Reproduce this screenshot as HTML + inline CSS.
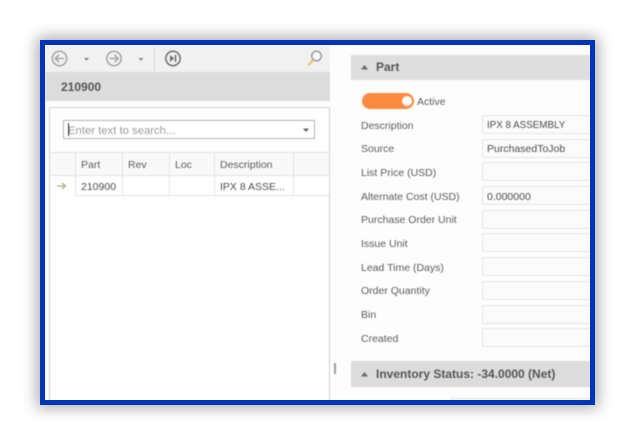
<!DOCTYPE html>
<html>
<head>
<meta charset="utf-8">
<style>
html,body{margin:0;padding:0;background:#fff;}
body{width:635px;height:445px;overflow:hidden;position:relative;font-family:"Liberation Sans",sans-serif;}
#frame{position:absolute;left:40px;top:40px;width:545px;height:355px;border:5px solid #0334b8;box-shadow:0 0 14px 3px rgba(0,0,0,.33);background:#fdfdfd;overflow:hidden;}
#wrap{position:absolute;left:-45px;top:-45px;width:635px;height:445px;filter:blur(.45px);}
.a{position:absolute;box-sizing:border-box;}
.t{position:absolute;font-size:10.5px;line-height:14px;color:#5c5c5c;white-space:nowrap;}
.b{font-weight:bold;font-size:12px;color:#555;font-family:"Liberation Sans",sans-serif;}
.f{position:absolute;left:482px;width:120px;height:19px;box-sizing:border-box;border:1px solid #e6e6e6;background:#fbfbfb;border-radius:1px;}
.v{position:absolute;left:487px;font-size:10.5px;line-height:14px;color:#4c4c4c;white-space:nowrap;}
.l{left:361px;}
.d{position:absolute;background:#e4e4e4;width:1px;top:152px;height:43px;}
</style>
</head>
<body>
<div id="frame">
<div id="wrap">
  <div class="a" style="left:45px;top:45px;width:285px;height:27px;background:#f1f1f1;"></div>
  <div class="a" style="left:45px;top:72px;width:285px;height:29px;background:#dcdcdc;"></div>
  <div class="a" style="left:154px;top:47px;width:1px;height:24px;background:#dadada;"></div>
  <svg class="a" style="left:45px;top:45px;" width="285" height="27" viewBox="0 0 285 27" fill="none">
    <circle cx="14.5" cy="13.5" r="7.2" stroke="#a0a0a0" stroke-width="1.4"/>
    <path d="M19 13.5H10.5M14 9.8L10.3 13.5L14 17.2" stroke="#a8a8a8" stroke-width="1.6"/>
    <path d="M39 13h5l-2.500 2.800z" fill="#808080"/>
    <circle cx="69" cy="13.500" r="7.200" stroke="#a0a0a0" stroke-width="1.4"/>
    <path d="M64.500 13.500H73M69.500 9.800L73.200 13.500L69.500 17.200" stroke="#a8a8a8" stroke-width="1.600"/>
    <path d="M93.500 13h5l-2.500 2.800z" fill="#808080"/>
    <circle cx="128" cy="13.500" r="7.200" stroke="#6e6e6e" stroke-width="1.500"/>
    <path d="M125 10v7l4-3.500z" fill="#6a6a6a"/>
    <path d="M130.500 10v7" stroke="#6a6a6a" stroke-width="1.500"/>
    <circle cx="271.500" cy="11" r="4.800" stroke="#9a9a9a" stroke-width="1.500" fill="#fbfbfb"/>
    <path d="M268 15L263 20.500" stroke="#e8c27c" stroke-width="2.200"/>
  </svg>
  <div class="t b" style="left:61px;top:80px;">210900</div>

  <div class="a" style="left:49px;top:107px;width:281px;height:300px;border:1px solid #d2d2d2;background:#fefefe;"></div>
  <div class="a" style="left:63px;top:120px;width:252px;height:19px;border:1px solid #b4b4b4;background:#fff;"></div>
  <div class="a" style="left:68px;top:123px;width:1px;height:13px;background:#333;"></div>
  <div class="t" style="left:68px;top:124px;color:#9a9a9a;font-size:11.3px;">Enter text to search...</div>
  <svg class="a" style="left:302px;top:127px;" width="8" height="6"><path d="M1 1.500h6L4 5z" fill="#666"/></svg>

  <div class="a" style="left:50px;top:152px;width:279px;height:24px;background:#f9f9f9;border-top:1px solid #e2e2e2;border-bottom:1px solid #e2e2e2;"></div>
  <div class="a" style="left:75px;top:176px;width:254px;height:20px;border-bottom:1px solid #e2e2e2;background:#fff;"></div>
  <div class="d" style="left:75px;"></div>
  <div class="d" style="left:122px;"></div>
  <div class="d" style="left:169px;"></div>
  <div class="d" style="left:214px;"></div>
  <div class="d" style="left:293px;"></div>
  <div class="t" style="left:81px;top:158px;">Part</div>
  <div class="t" style="left:128px;top:158px;">Rev</div>
  <div class="t" style="left:175px;top:158px;">Loc</div>
  <div class="t" style="left:220px;top:158px;">Description</div>
  <div class="t" style="left:81px;top:180px;color:#4c4c4c;">210900</div>
  <div class="t" style="left:220px;top:180px;color:#4c4c4c;">IPX 8 ASSE...</div>
  <svg class="a" style="left:56px;top:181px;" width="12" height="10" fill="none"><path d="M1 5h8.500M6 2l3.500 3L6 8" stroke="#a8b47c" stroke-width="1.200"/></svg>

  <div class="a" style="left:334px;top:363px;width:2px;height:11px;background:#9c9c9c;"></div>

  <div class="a" style="left:351px;top:55px;width:240px;height:25px;background:#dedede;"></div>
  <svg class="a" style="left:360px;top:63px;" width="9" height="8"><path d="M1 6.500h7L4.500 2z" fill="#6a6a6a"/></svg>
  <div class="t b" style="left:376px;top:60px;">Part</div>

  <div class="a" style="left:362px;top:93px;width:52px;height:16px;border-radius:8px;background:#fa8a3f;"></div>
  <div class="a" style="left:402px;top:96px;width:10px;height:10px;border-radius:50%;background:#fff;"></div>
  <div class="t" style="left:417px;top:95px;">Active</div>

  <div class="t l" style="top:119px;">Description</div>
  <div class="f" style="top:115px;"></div>
  <div class="v" style="top:119px;font-size:9.8px;">IPX 8 ASSEMBLY</div>
  <div class="t l" style="top:142px;">Source</div>
  <div class="f" style="top:139px;"></div>
  <div class="v" style="top:142px;">PurchasedToJob</div>
  <div class="t l" style="top:166px;">List Price (USD)</div>
  <div class="f" style="top:162px;"></div>
  <div class="t l" style="top:190px;">Alternate Cost (USD)</div>
  <div class="f" style="top:186px;"></div>
  <div class="v" style="top:190px;">0.000000</div>
  <div class="t l" style="top:213px;">Purchase Order Unit</div>
  <div class="f" style="top:210px;"></div>
  <div class="t l" style="top:237px;">Issue Unit</div>
  <div class="f" style="top:233px;"></div>
  <div class="t l" style="top:261px;">Lead Time (Days)</div>
  <div class="f" style="top:257px;"></div>
  <div class="t l" style="top:284px;">Order Quantity</div>
  <div class="f" style="top:281px;"></div>
  <div class="t l" style="top:308px;">Bin</div>
  <div class="f" style="top:305px;"></div>
  <div class="t l" style="top:332px;">Created</div>
  <div class="f" style="top:328px;"></div>

  <div class="a" style="left:351px;top:361px;width:240px;height:26px;background:#dcdcdc;"></div>
  <svg class="a" style="left:360px;top:370px;" width="9" height="8"><path d="M1 6.500h7L4.500 2z" fill="#6a6a6a"/></svg>
  <div class="t b" style="left:376px;top:367px;">Inventory Status: -34.0000 (Net)</div>
  <div class="a" style="left:451px;top:398px;width:145px;height:10px;border:1px solid #e4e4e4;background:#fbfbfb;"></div>
</div>
</div>
</body>
</html>
